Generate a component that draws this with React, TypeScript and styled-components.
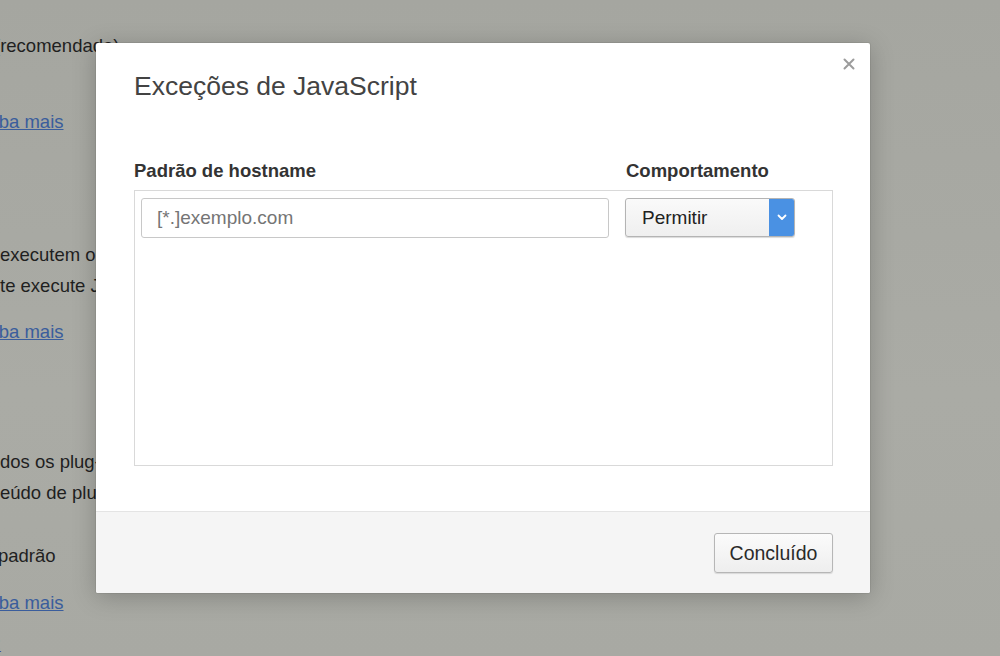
import React, {FC} from 'react';
import styled, {createGlobalStyle} from 'styled-components';

const GlobalStyle = createGlobalStyle`
    html, body {
        margin: 0;
        padding: 0;
    }
    body {
        background: #a9aaa4;
        font-family: 'Liberation Sans', Arial, sans-serif;
    }
`;

const Page = styled.div`
    position: relative;
    width: 1000px;
    height: 656px;
    overflow: hidden;
    background: linear-gradient(180deg, #a5a6a0 0%, #aaaba5 60%, #a8a9a3 100%);
`;

// settings page that sits behind the overlay
const Behind = styled.div`
    display: flex;
    flex-direction: column;
    padding-top: 30px;
    font-size: 18.5px;
    line-height: 31px;
    color: #1f1f1f;
    white-space: nowrap;
`;

const Line = styled.div<{$top: number; $shift?: number}>`
    margin-top: ${props => props.$top}px;
    margin-left: ${props => props.$shift || 0}px;
`;

const Link = styled.a`
    color: #3a5d9c;
    text-decoration: underline;
`;

const Dialog = styled.div`
    position: absolute;
    left: 96px;
    top: 43px;
    width: 774px;
    height: 550px;
    display: flex;
    flex-direction: column;
    background: #ffffff;
    border-radius: 2px;
    box-shadow: 0 4px 24px rgba(0, 0, 0, 0.22), 0 0 0 1px rgba(0, 0, 0, 0.06);
    overflow: hidden;
`;

const Header = styled.div`
    position: relative;
    padding: 27px 38px 0;
    height: 90px;
    box-sizing: border-box;
`;

const Title = styled.h1`
    margin: 0;
    font-size: 26.5px;
    line-height: 32px;
    font-weight: normal;
    color: #434343;
`;

const Close = styled.button`
    position: absolute;
    top: 15px;
    right: 15px;
    width: 12px;
    height: 12px;
    padding: 0;
    border: none;
    background: none;
    display: flex;
`;

const Body = styled.div`
    flex: 1;
    padding: 27px 37px 0 38px;
`;

const Columns = styled.div`
    display: grid;
    grid-template-columns: 492px 1fr;
`;

const ColumnLabel = styled.div`
    font-size: 18.5px;
    font-weight: bold;
    line-height: 22px;
    color: #333333;
    padding-bottom: 8px;
`;

const Table = styled.div`
    height: 276px;
    box-sizing: border-box;
    border: 1px solid #d9d9d9;
    padding: 7px 6px;
`;

const Row = styled.div`
    display: grid;
    grid-template-columns: 484px 1fr;
    align-items: start;
`;

const Input = styled.input`
    box-sizing: border-box;
    width: 468px;
    height: 40px;
    padding: 0 15px;
    border: 1px solid #c8c8c8;
    border-radius: 3px;
    font-family: 'Liberation Sans', Arial, sans-serif;
    font-size: 19px;
    color: #333;
    outline: none;

    ::placeholder {
        color: #ababab;
    }
`;

const Select = styled.div`
    box-sizing: border-box;
    width: 170px;
    height: 39px;
    display: flex;
    border: 1px solid #b4b4b4;
    border-radius: 3px;
    background: linear-gradient(180deg, #fafafa, #efefef);
    box-shadow: 0 1px 1px rgba(0, 0, 0, 0.15);
    overflow: hidden;
`;

const SelectValue = styled.span`
    flex: 1;
    padding-left: 16px;
    font-size: 19px;
    line-height: 37px;
    color: #222;
`;

const SelectArrow = styled.span`
    width: 25px;
    display: flex;
    align-items: center;
    justify-content: center;
    background: #4a91e3;
`;

const Footer = styled.div`
    height: 82px;
    box-sizing: border-box;
    border-top: 1px solid #e4e4e4;
    background: #f5f5f5;
    display: flex;
    justify-content: flex-end;
    align-items: flex-start;
    padding: 21px 37px 0;
`;

const Button = styled.button`
    box-sizing: border-box;
    width: 119px;
    height: 40px;
    border: 1px solid #b6b6b6;
    border-radius: 3px;
    background: linear-gradient(180deg, #fbfbfb, #eeeeee);
    box-shadow: 0 1px 1px rgba(0, 0, 0, 0.12);
    font-family: 'Liberation Sans', Arial, sans-serif;
    font-size: 19.5px;
    color: #2a2a2a;
`;

const CloseIcon: FC = () => (
    <svg width="12" height="12" viewBox="0 0 12 12">
        <path d="M1.5 1.5 L10.5 10.5 M10.5 1.5 L1.5 10.5" stroke="#9c9c9c" strokeWidth="2" strokeLinecap="round" />
    </svg>
);

const Chevron: FC = () => (
    <svg width="10" height="7" viewBox="0 0 10 7">
        <path d="M1.5 1.5 L5 5 L8.5 1.5" stroke="#ffffff" strokeWidth="1.8" fill="none" strokeLinecap="round" strokeLinejoin="round" />
    </svg>
);

const App: FC = () => (
    <Page>
        <GlobalStyle />
        <Behind>
            <Line $top={0} $shift={-6}>(recomendada)</Line>
            <Line $top={45} $shift={-28}><Link>Saiba mais</Link></Line>
            <Line $top={102}>executem o JavaScript</Line>
            <Line $top={0}>te execute JavaScript</Line>
            <Line $top={15} $shift={-28}><Link>Saiba mais</Link></Line>
            <Line $top={99}>dos os plug-ins</Line>
            <Line $top={0}>eúdo de plug-in</Line>
            <Line $top={32} $shift={-2}>padrão</Line>
            <Line $top={16} $shift={-28}><Link>Saiba mais</Link></Line>
            <Line $top={10} $shift={-4}><Link>:</Link></Line>
        </Behind>

        <Dialog>
            <Header>
                <Title>Exceções de JavaScript</Title>
                <Close aria-label="Fechar"><CloseIcon /></Close>
            </Header>
            <Body>
                <Columns>
                    <ColumnLabel>Padrão de hostname</ColumnLabel>
                    <ColumnLabel>Comportamento</ColumnLabel>
                </Columns>
                <Table>
                    <Row>
                        <Input placeholder="[*.]exemplo.com" />
                        <Select>
                            <SelectValue>Permitir</SelectValue>
                            <SelectArrow><Chevron /></SelectArrow>
                        </Select>
                    </Row>
                </Table>
            </Body>
            <Footer>
                <Button>Concluído</Button>
            </Footer>
        </Dialog>
    </Page>
);

export default App;
